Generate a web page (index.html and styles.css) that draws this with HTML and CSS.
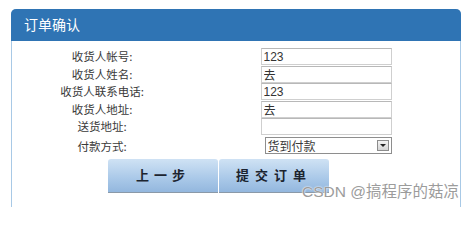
FILE: index.html
```html
<!DOCTYPE html>
<html lang="zh-CN">
<head>
<meta charset="utf-8">
<title>订单确认</title>
<link rel="stylesheet" href="styles.css">
</head>
<body>
<div class="panel">
  <div class="panel-header">订单确认</div>
  <form class="order-form">
    <div class="grid">
      <label class="lbl">收货人帐号:</label>
      <div class="cell"><input class="txt" type="text" value="123"></div>
      <label class="lbl">收货人姓名:</label>
      <div class="cell"><input class="txt" type="text" value="去"></div>
      <label class="lbl">收货人联系电话:</label>
      <div class="cell"><input class="txt" type="text" value="123"></div>
      <label class="lbl">收货人地址:</label>
      <div class="cell"><input class="txt" type="text" value="去"></div>
      <label class="lbl">送货地址:</label>
      <div class="cell"><input class="txt" type="text" value=""></div>
      <label class="lbl lbl-select">付款方式:</label>
      <div class="cell cell-select">
        <div class="select-wrap">
          <select class="sel"><option>货到付款</option></select>
          <span class="sel-arrow"><span class="tri"></span></span>
        </div>
      </div>
    </div>
    <div class="actions">
      <button type="button" class="btn">上一步</button>
      <button type="button" class="btn btn-wide">提交订单</button>
    </div>
  </form>
</div>
<div class="watermark">CSDN @搞程序的菇凉</div>
</body>
</html>
```

FILE: styles.css
```css
html, body {
  margin: 0;
  padding: 0;
  background: #ffffff;
}
body {
  width: 474px;
  height: 207px;
  overflow: hidden;
  position: relative;
  font-family: "Noto Sans CJK SC", "Liberation Sans", sans-serif;
}
.panel {
  margin: 9px 0 0 11px;
  width: 450px;
  height: 240px;
  box-sizing: border-box;
  border: 1px solid #a8c9e6;
  border-top: none;
  border-radius: 5px 5px 0 0;
  background: #ffffff;
}
.panel-header {
  height: 32px;
  line-height: 31px;
  margin: 0 -1px;
  padding-left: 13px;
  background: #2f74b4;
  color: #ffffff;
  font-size: 14px;
  border-radius: 5px 5px 0 0;
}
.order-form {
  padding-top: 7px;
}
.grid {
  display: grid;
  grid-template-columns: 180px 268px;
  grid-auto-rows: 17.5px;
}
.lbl {
  font-size: 11.5px;
  color: #3a3a3a;
  text-align: center;
  line-height: 17.5px;
  white-space: nowrap;
}
.cell {
  display: flex;
  justify-content: center;
  align-items: flex-start;
}
.txt {
  width: 131px;
  height: 17px;
  box-sizing: border-box;
  margin: 0;
  padding: 0 2px;
  border: 1px solid #cfcfcf;
  border-top-color: #b8b8b8;
  font-family: "Liberation Sans", "Noto Sans CJK SC", sans-serif;
  font-size: 12px;
  color: #333333;
  outline: none;
  background: #ffffff;
}
.lbl-select {
  line-height: 20px;
}
.cell-select {
  padding-top: 1.5px;
  padding-left: 4px;
}
.select-wrap {
  position: relative;
  width: 127px;
  height: 17px;
}
.sel {
  display: block;
  appearance: none;
  -webkit-appearance: none;
  width: 127px;
  height: 17px;
  box-sizing: border-box;
  margin: 0;
  padding: 0 0 0 2px;
  border: 1px solid #8e8e8e;
  border-radius: 0;
  background: #ffffff;
  font-family: "Noto Sans CJK SC", sans-serif;
  font-size: 12px;
  line-height: 15px;
  color: #3a3a3a;
}
.sel-arrow {
  position: absolute;
  right: 3px;
  top: 3px;
  width: 10px;
  height: 9px;
  border: 1px solid #8c8c8c;
  background: linear-gradient(#f4f4f4, #d4d4d4);
  display: flex;
  align-items: center;
  justify-content: center;
}
.tri {
  width: 0;
  height: 0;
  border-left: 3px solid transparent;
  border-right: 3px solid transparent;
  border-top: 3px solid #222222;
}
.actions {
  display: flex;
  gap: 1px;
  padding-left: 96px;
  margin-top: 6px;
}
.btn {
  width: 110px;
  height: 33px;
  margin: 0;
  padding: 0 0 2px 0;
  border: none;
  border-radius: 3px 3px 0 0;
  background: linear-gradient(#cfe2f4, #a9c8e8 60%, #93b7de);
  box-shadow: 0 1px 0 #8a99a8;
  font-family: "Noto Sans CJK SC", sans-serif;
  font-weight: bold;
  font-size: 13px;
  letter-spacing: 5px;
  color: #1c2430;
}
.btn-wide {
  letter-spacing: 6px;
}
.watermark {
  position: absolute;
  right: 15px;
  top: 179px;
  font-family: "Liberation Sans", "Noto Sans CJK SC", sans-serif;
  font-size: 15.5px;
  color: #9c9c9c;
  text-shadow: 0 0 2px #ffffff, 0 0 1px #ffffff;
  white-space: nowrap;
}
```
